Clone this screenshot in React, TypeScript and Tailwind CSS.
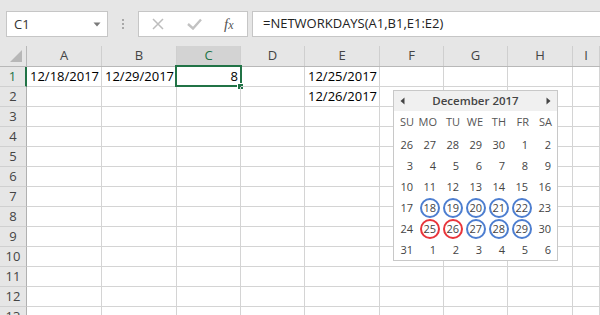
import React from "react";

const cols = [
  { l: "A", w: "w-[75px]" },
  { l: "B", w: "w-[75px]" },
  { l: "C", w: "w-[64px]" },
  { l: "D", w: "w-[64px]" },
  { l: "E", w: "w-[75px]" },
  { l: "F", w: "w-[64px]" },
  { l: "G", w: "w-[64px]" },
  { l: "H", w: "w-[65px]" },
  { l: "I", w: "flex-1" },
];

const cellData: Record<string, string> = {
  "1A": "12/18/2017",
  "1B": "12/29/2017",
  "1C": "8",
  "1E": "12/25/2017",
  "2E": "12/26/2017",
};

const weeks = [
  [26, 27, 28, 29, 30, 1, 2],
  [3, 4, 5, 6, 7, 8, 9],
  [10, 11, 12, 13, 14, 15, 16],
  [17, 18, 19, 20, 21, 22, 23],
  [24, 25, 26, 27, 28, 29, 30],
  [31, 1, 2, 3, 4, 5, 6],
];
const blue = new Set([18, 19, 20, 21, 22, 27, 28, 29]);
const red = new Set([25, 26]);

function Calendar() {
  return (
    <div className="absolute left-[393px] top-[90px] w-[165px] h-[171px] border border-[#c8c8c8] bg-white font-['Open_Sans',sans-serif] text-[11px] text-[#444]">
      <div className="h-[20px] bg-[#f0f0f0] flex items-center justify-between px-[6px]">
        <svg width="5" height="8" viewBox="0 0 5 8">
          <polygon points="4.5,0.5 4.5,7.5 0.5,4" fill="#444" />
        </svg>
        <span className="font-semibold text-[11.5px] text-[#444] leading-none">December 2017</span>
        <svg width="5" height="8" viewBox="0 0 5 8">
          <polygon points="0.5,0.5 0.5,7.5 4.5,4" fill="#444" />
        </svg>
      </div>
      <div className="grid grid-cols-[repeat(7,23px)] h-[23px] items-center">
        {["SU", "MO", "TU", "WE", "TH", "FR", "SA"].map((d) => (
          <div key={d} className="text-right pr-[3px] text-[#555]">
            {d}
          </div>
        ))}
      </div>
      {weeks.map((w, i) => (
        <div key={i} className="grid grid-cols-[repeat(7,23px)] h-[21px] items-center">
          {w.map((n, j) => {
            const inMonth = !((i === 0 && n > 20) || (i === 5 && n < 10));
            const circ = inMonth && blue.has(n) ? "border-[#4d7ed0]" : inMonth && red.has(n) ? "border-[#e8353b]" : "";
            return (
              <div key={j} className="relative text-right pr-[4px] leading-[21px]">
                {circ && (
                  <span className={`absolute right-[0px] top-[0.5px] w-[20px] h-[20px] rounded-full border-2 ${circ}`} />
                )}
                <span className="relative">{n}</span>
              </div>
            );
          })}
        </div>
      ))}
    </div>
  );
}

export default function App() {
  const rows = Array.from({ length: 13 }, (_, i) => i + 1);
  return (
    <div className="relative w-[600px] h-[315px] overflow-hidden bg-white font-['Open_Sans',sans-serif] text-[13px] text-black">
      {/* toolbar */}
      <div className="h-[46px] bg-[#e6e6e6] flex items-start pt-[11px] pl-[6px]">
        <div className="w-[102px] h-[26px] border border-[#c6c6c6] bg-white flex items-center justify-between pl-[7px] pr-[6px]">
          <span className="text-[#333] leading-none">C1</span>
          <svg width="8" height="5" viewBox="0 0 8 5">
            <polygon points="0.5,0.5 7.5,0.5 4,4.5" fill="#7a7a7a" />
          </svg>
        </div>
        <div className="ml-[14px] mt-[8px] flex flex-col gap-[2px]">
          <span className="w-[2px] h-[2px] bg-[#a8a8a8]" />
          <span className="w-[2px] h-[2px] bg-[#a8a8a8]" />
          <span className="w-[2px] h-[2px] bg-[#a8a8a8]" />
        </div>
        <div className="ml-[14px] w-[110px] h-[26px] border border-[#c6c6c6] bg-white flex items-center pl-[13px]">
          <svg width="12" height="12" viewBox="0 0 12 12">
            <path d="M1 1 L11 11 M11 1 L1 11" stroke="#bdbdbd" strokeWidth="1.5" fill="none" />
          </svg>
          <svg className="ml-[23px]" width="15" height="12" viewBox="0 0 15 12">
            <path d="M1 6 L6 10.5 L14 1.5" stroke="#c2c2c2" strokeWidth="2.4" fill="none" />
          </svg>
          <span className="ml-[22px] font-['Liberation_Serif',serif] italic text-[15px] text-[#555] leading-none">
            f<span className="text-[12px]">x</span>
          </span>
        </div>
        <div className="ml-[4px] flex-1 h-[26px] border border-r-0 border-[#c6c6c6] bg-white flex items-center pl-[10px] text-[#222]">
          =NETWORKDAYS(A1,B1,E1:E2)
        </div>
      </div>

      {/* header row */}
      <div className="flex h-[21px] bg-[#e6e6e6] border-b border-[#b8b8b8]">
        <div className="w-[27px] h-full border-r border-[#b8b8b8] relative">
          <svg className="absolute left-[9px] top-[3px]" width="14" height="14" viewBox="0 0 14 14">
            <polygon points="13,1 13,13 1,13" fill="#b7b7b7" />
          </svg>
        </div>
        {cols.map((c) => (
          <div
            key={c.l}
            className={`${c.w} h-full flex items-center justify-center border-r border-[#cfcfcf] ${
              c.l === "C" ? "bg-[#d3d3d3] text-[#217346]" : "text-[#444]"
            }`}
          >
            {c.l}
          </div>
        ))}
      </div>

      {/* rows */}
      {rows.map((r) => (
        <div key={r} className="flex h-[20px]">
          <div
            className={`w-[27px] h-full flex items-center justify-center bg-[#e6e6e6] border-b border-[#d0d0d0] ${
              r === 1 ? "border-r-2 border-r-[#217346] text-[#217346]" : "border-r border-r-[#b0b0b0] text-[#444]"
            }`}
          >
            {r}
          </div>
          {cols.map((c) => {
            const key = `${r}${c.l}`;
            const v = cellData[key];
            const sel = key === "1C";
            return (
              <div
                key={c.l}
                className={`${c.w} h-full relative border-r border-b border-[#d4d4d4] flex items-center justify-end pr-[2px]`}
              >
                {v && <span className="leading-none">{v}</span>}
                {sel && (
                  <>
                    <span className="absolute left-[-2px] top-[-2px] right-[-2px] bottom-[-1px] border-2 border-[#217346]" />
                    <span className="absolute right-[-4px] bottom-[-4px] w-[7px] h-[7px] bg-[#217346] border border-white" />
                  </>
                )}
              </div>
            );
          })}
        </div>
      ))}

      <Calendar />
    </div>
  );
}
